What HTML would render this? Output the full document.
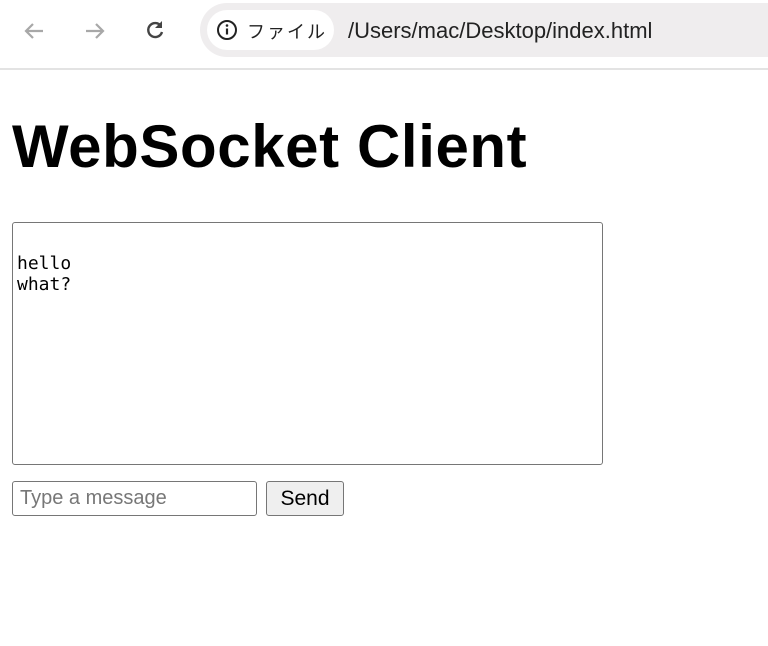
<!DOCTYPE html>
<html><head><meta charset="utf-8"><style>
body{margin:0;width:768px;height:646px;background:#fff;font-family:"Liberation Sans","Noto Sans CJK JP",sans-serif;position:relative;overflow:hidden}
.bar{position:absolute;left:0;top:0;width:768px;height:68px;background:#fff;border-bottom:2px solid #e3e3e3}
.omni{position:absolute;left:200px;top:3px;width:600px;height:54px;border-radius:27px;background:#efedee}
.chip{position:absolute;left:207px;top:10px;width:127px;height:40px;border-radius:20px;background:#fff}
.chip span{position:absolute;left:40px;top:8px;font-size:18px;color:#222;letter-spacing:2px}
.url{position:absolute;left:348px;top:18px;font-size:22px;color:#222}
svg{position:absolute}
h1{position:absolute;left:12px;top:112px;margin:0;font-size:60px;font-weight:bold;color:#000;letter-spacing:0.6px}
.ta{position:absolute;left:12px;top:222px;width:589px;height:241px;border:1px solid #767676;border-radius:3px}
.ta pre{margin:0;position:absolute;left:4px;top:30px;font-family:"DejaVu Sans Mono",monospace;font-size:18px;line-height:21px;color:#000}
.in{position:absolute;left:12px;top:481px;height:35px;border:1px solid #767676;border-radius:3px;font-size:20px;color:#777;line-height:33px;text-indent:7px;box-sizing:border-box;width:245px}
.btn{position:absolute;left:266px;top:481px;width:78px;height:35px;border:1px solid #767676;border-radius:3px;background:#efefef;box-sizing:border-box;font-size:21px;text-align:center;line-height:33px}
</style></head><body>
<div class="bar"></div>
<svg width="30" height="30" style="left:20px;top:16px" viewBox="0 0 30 30"><path d="M23 15H6M13 8l-7 7 7 7" stroke="#a8a8a8" stroke-width="2.2" fill="none"/></svg>
<svg width="30" height="30" style="left:80px;top:16px" viewBox="0 0 30 30"><path d="M6 15h17M16 8l7 7-7 7" stroke="#a8a8a8" stroke-width="2.2" fill="none"/></svg>
<svg width="30" height="30" style="left:140px;top:15px" viewBox="0 0 30 30"><path d="M21 11A7 7 0 1 0 22 17" stroke="#444" stroke-width="2.4" fill="none"/><path d="M22 6v7h-7z" fill="#444"/></svg>
<div class="omni"></div>
<div class="chip"><svg width="24" height="24" style="left:8px;top:8px" viewBox="0 0 24 24"><circle cx="12" cy="12" r="9" stroke="#222" stroke-width="2" fill="none"/><path d="M12 10.5v6" stroke="#222" stroke-width="2.2"/><circle cx="12" cy="7.5" r="1.3" fill="#222"/></svg><span>ファイル</span></div>
<div class="url">/Users/mac/Desktop/index.html</div>
<h1>WebSocket Client</h1>
<div class="ta"><pre>hello
what?</pre></div>
<div class="in">Type a message</div>
<div class="btn">Send</div>
</body></html>
